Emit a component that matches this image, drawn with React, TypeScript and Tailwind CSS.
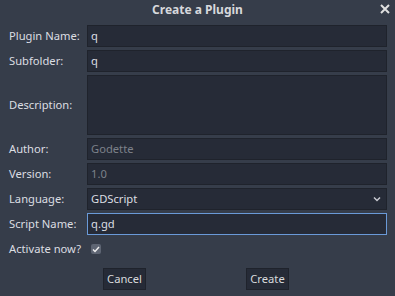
export default function App() {
  const field = "h-[22px] bg-[#262b37] border border-[#1f232c] px-[3px] flex items-center";

  return (
    <div
      className="w-[395px] h-[296px] bg-[#363d4a] text-[#dcdee2] text-[11.2px] relative overflow-hidden"
      style={{ fontFamily: '"Noto Sans", sans-serif' }}
    >
      {/* title bar */}
      <div className="h-[25px] flex items-center justify-center relative">
        <span className="font-bold text-[12px] text-[#d6d8dc] -mt-[6px]">Create a Plugin</span>
        <svg className="absolute right-[5px] top-[4px]" width="10" height="10" viewBox="0 0 10 10">
          <path d="M1 1L9 9M9 1L1 9" stroke="#e0e0e0" strokeWidth="2" />
        </svg>
      </div>

      <div className="flex flex-col gap-[3px] pl-[9px] pr-[8px]">
        <Row label="Plugin Name:">
          <div className={field}>q</div>
        </Row>
        <Row label="Subfolder:">
          <div className={field}>q</div>
        </Row>
        <div className="flex items-center h-[60px]">
          <div className="w-[78px]">Description:</div>
          <div className="flex-1 h-[60px] bg-[#262b37] border border-[#1f232c]" />
        </div>
        <Row label="Author:">
          <div className={`${field} text-[#7d818a]`}>Godette</div>
        </Row>
        <Row label="Version:">
          <div className={`${field} text-[#7d818a]`}>1.0</div>
        </Row>
        <Row label="Language:">
          <div className={`${field} justify-between`}>
            <span>GDScript</span>
            <svg width="8" height="6" viewBox="0 0 8 6" className="mr-[2px]">
              <path d="M1 1.5L4 4.5L7 1.5" stroke="#c8cad0" strokeWidth="1.5" fill="none" />
            </svg>
          </div>
        </Row>
        <Row label="Script Name:">
          <div className="h-[22px] bg-[#262b37] border border-[#6a9ad8] px-[3px] flex items-center">q.gd</div>
        </Row>
        <div className="flex items-center h-[20px] mt-[1px]">
          <span>Activate now?</span>
          <div className="ml-[10px] w-[10px] h-[10px] rounded-[2px] bg-[#5e6573] flex items-center justify-center">
            <svg width="8" height="7" viewBox="0 0 8 7">
              <path d="M1 3.5L3 5.5L7 1" stroke="#f0f0f0" strokeWidth="1.4" fill="none" />
            </svg>
          </div>
        </div>
      </div>

      <div className="flex mt-[9px]">
        <button className="ml-[103px] w-[43px] h-[22px] bg-[#262b37] border border-[#1f232c] text-[#d8dadd] leading-none">Cancel</button>
        <button className="ml-[100px] w-[43px] h-[22px] bg-[#262b37] border border-[#1f232c] text-[#d8dadd] leading-none">Create</button>
      </div>
    </div>
  );
}

function Row({ label, children }: { label: string; children: React.ReactNode }) {
  return (
    <div className="flex items-center h-[22px]">
      <div className="w-[78px]">{label}</div>
      <div className="flex-1">{children}</div>
    </div>
  );
}
